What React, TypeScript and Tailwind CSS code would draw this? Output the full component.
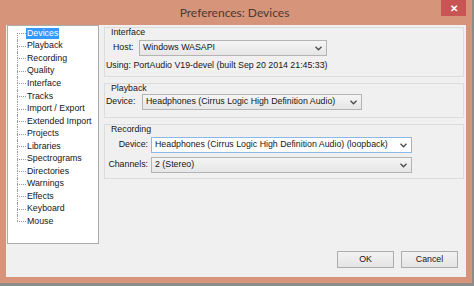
import React from "react";

const items = [
  "Devices",
  "Playback",
  "Recording",
  "Quality",
  "Interface",
  "Tracks",
  "Import / Export",
  "Extended Import",
  "Projects",
  "Libraries",
  "Spectrograms",
  "Directories",
  "Warnings",
  "Effects",
  "Keyboard",
  "Mouse",
];

const Chevron = () => (
  <svg width="7" height="5" viewBox="0 0 7 5" className="shrink-0">
    <path d="M0.5 0.8 L3.5 3.8 L6.5 0.8" fill="none" stroke="#4a4a4a" strokeWidth="1.3" />
  </svg>
);

const Select = ({
  value,
  className,
  focused,
}: {
  value: string;
  className: string;
  focused?: boolean;
}) => (
  <div
    className={`flex h-[16px] items-center justify-between border pl-[3px] pr-[4px] ${
      focused
        ? "border-[#8cb8e8] bg-white"
        : "border-[#b4b4b4] bg-gradient-to-b from-[#f5f5f5] to-[#e6e6e6]"
    } ${className}`}
  >
    <span className="whitespace-nowrap">{value}</span>
    <Chevron />
  </div>
);

const TreeRow = ({ label, first, last }: { label: string; first: boolean; last: boolean }) => (
  <div className="flex h-[12.55px] items-stretch">
    <div className="flex w-[9px] shrink-0 flex-col">
      <div className={`h-1/2 ${first ? "" : "border-l border-dotted border-[#999]"}`} />
      <div className={`h-1/2 border-t border-dotted border-[#999] ${last ? "" : "border-l"}`} />
    </div>
    <div className="flex items-center">
      <span
        className={`whitespace-nowrap px-[1px] leading-[11px] ${
          first ? "bg-[#3399ff] text-white" : "text-[#161616]"
        }`}
      >
        {label}
      </span>
    </div>
  </div>
);

const Group = ({
  title,
  className,
  children,
}: {
  title: string;
  className: string;
  children: React.ReactNode;
}) => (
  <div className={`border border-[#dcdcdc] ${className}`}>
    <div className="pl-[6px] leading-[9px]">{title}</div>
    {children}
  </div>
);

export default function App() {
  return (
    <div className="h-[286px] w-[474px] overflow-hidden bg-[#8e8c88] font-['Liberation_Sans',sans-serif] text-[8.8px] text-[#161616]">
      <div className="flex h-[283px] w-[472px] flex-col bg-[#d6947a]">
        <div className="flex h-[25px] shrink-0 items-start">
          <div className="flex-1 pl-[28px] pt-[5px] text-center font-['Lato',sans-serif] text-[12px] leading-[15px] text-[#4a3a34]">
            Preferences: Devices
          </div>
          <div className="mr-[6px] flex h-[16px] w-[25px] items-center justify-center bg-[#c95454] text-[10px] font-bold text-white">
            ✕
          </div>
        </div>
        <div className="mx-[6px] mb-[6px] flex flex-1 flex-col bg-[#f0f0f0]">
          <div className="flex">
            <div className="ml-[1px] h-[219px] w-[92px] shrink-0 border border-[#acacac] bg-white pl-[9px] pt-[1px]">
              {items.map((it, i) => (
                <TreeRow key={it} label={it} first={i === 0} last={i === items.length - 1} />
              ))}
            </div>
            <div className="ml-[5px] flex w-[360px] flex-col gap-[6px] pt-[2px]">
              <Group title="Interface" className="h-[50px]">
                <div className="mt-[3px] flex items-center pl-[8px]">
                  <span className="w-[26px]">Host:</span>
                  <Select value="Windows WASAPI" className="w-[188px]" />
                </div>
                <div className="mt-[4px] pl-[1px] leading-[10px]">
                  Using: PortAudio V19-devel (built Sep 20 2014 21:45:33)
                </div>
              </Group>
              <Group title="Playback" className="h-[35px]">
                <div className="mt-[1px] flex items-center pl-[1px]">
                  <span className="w-[36px]">Device:</span>
                  <Select
                    value="Headphones (Cirrus Logic High Definition Audio)"
                    className="w-[220px]"
                  />
                </div>
              </Group>
              <Group title="Recording" className="h-[55px]">
                <div className="mt-[3px] flex items-center">
                  <span className="mr-[3px] w-[43px] text-right">Device:</span>
                  <Select
                    value="Headphones (Cirrus Logic High Definition Audio) (loopback)"
                    className="w-[261px]"
                    focused
                  />
                </div>
                <div className="mt-[4px] flex items-center">
                  <span className="mr-[3px] w-[43px] text-right">Channels:</span>
                  <Select value="2 (Stereo)" className="w-[261px]" />
                </div>
              </Group>
            </div>
          </div>
          <div className="mb-[9px] mt-auto flex justify-end gap-[7px] pr-[8px]">
            <button className="h-[17px] w-[57px] border border-[#acacac] bg-gradient-to-b from-[#f2f2f2] to-[#e4e4e4] leading-[15px]">
              OK
            </button>
            <button className="h-[17px] w-[57px] border border-[#acacac] bg-gradient-to-b from-[#f2f2f2] to-[#e4e4e4] leading-[15px]">
              Cancel
            </button>
          </div>
        </div>
      </div>
    </div>
  );
}
